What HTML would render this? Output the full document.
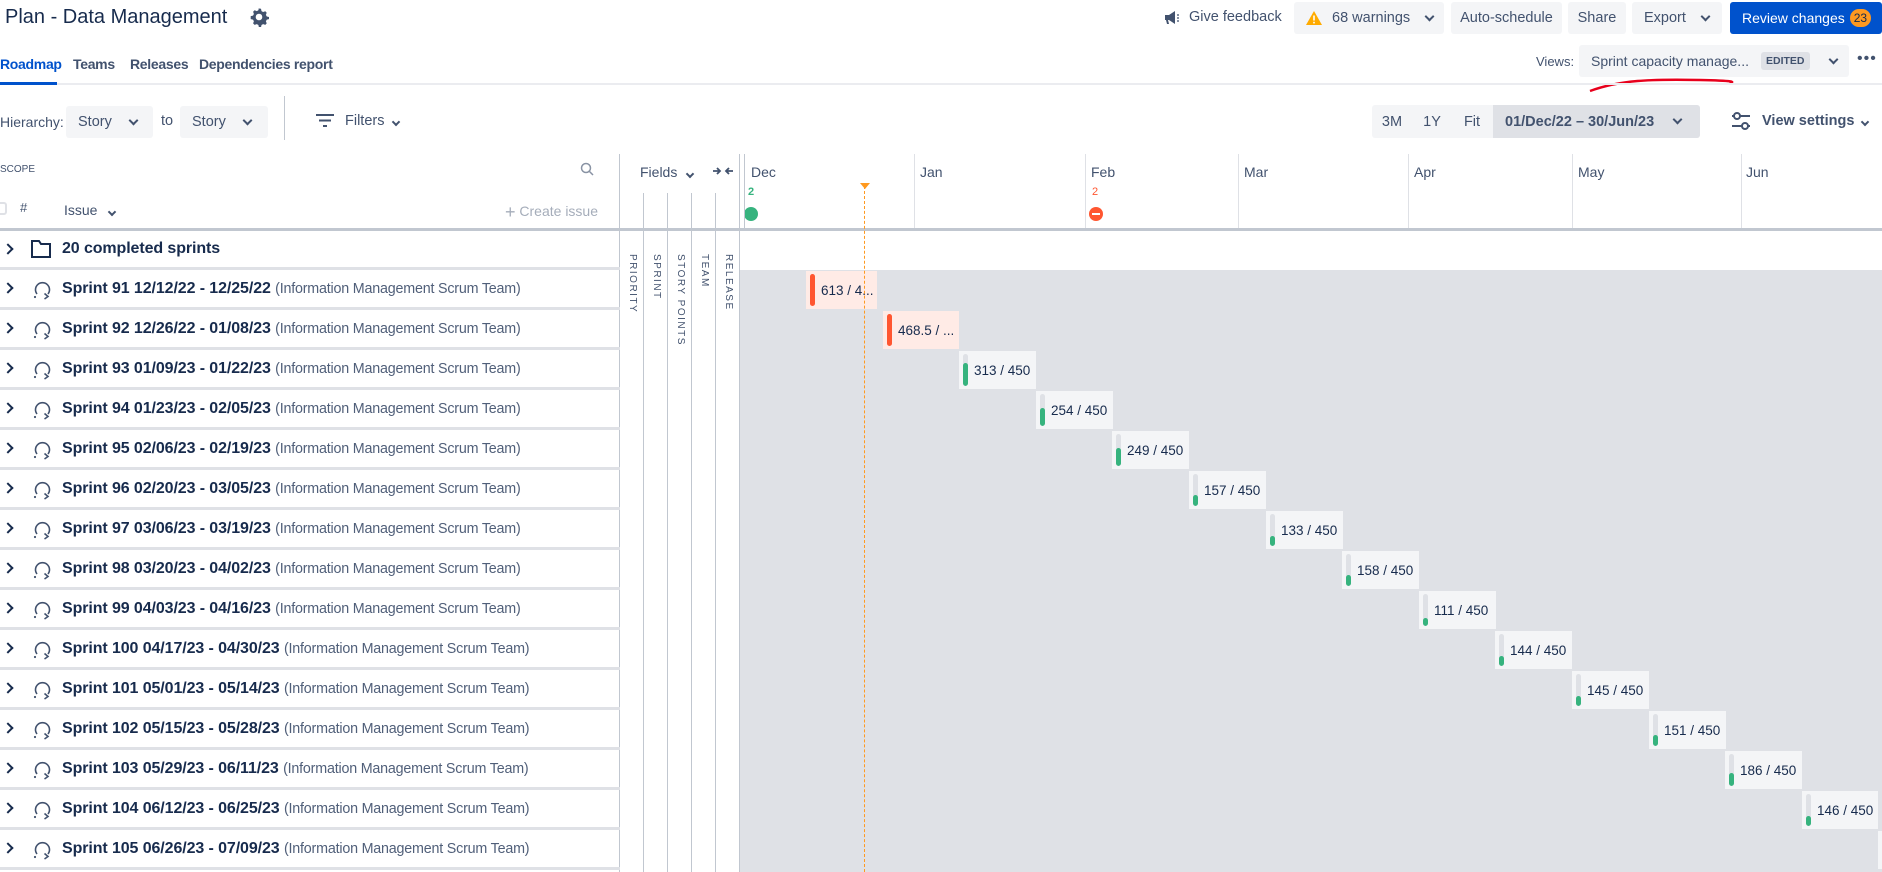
<!DOCTYPE html>
<html><head><meta charset="utf-8"><style>
*{box-sizing:border-box;margin:0;padding:0}
body{width:1882px;height:872px;overflow:hidden;background:#fff;font-family:"Liberation Sans",sans-serif;color:#172b4d;position:relative}
.a{position:absolute}
.btn{position:absolute;background:#f4f5f7;border-radius:3px;font-size:14.5px;color:#42526e;display:flex;align-items:center;white-space:nowrap}
.chev{display:inline-block;width:7px;height:7px;border-right:2px solid #42526e;border-bottom:2px solid #42526e;transform:rotate(45deg);margin-top:-4px}
.row{position:absolute;left:0;width:620px;height:40px;border-bottom:3px solid #dfe1e6;display:flex;align-items:center;font-size:16px;white-space:nowrap}
.row .ar{position:absolute;left:4px;top:14px;width:8px;height:8px;border-right:2.5px solid #172b4d;border-bottom:2.5px solid #172b4d;transform:rotate(-45deg)}
.row svg{position:absolute;left:30px;top:8px}
.row .t{position:absolute;left:62px;font-weight:bold;letter-spacing:-0.1px}
.row .t span{font-weight:normal;font-size:14.3px;color:#505f79;letter-spacing:-0.2px}
.bar{position:absolute;height:38px;background:#f4f5f7;font-size:13.5px;color:#172b4d;display:flex;align-items:center;padding-left:15px;white-space:nowrap;overflow:hidden}
.bar .tr{position:absolute;left:4px;top:3px;width:5px;height:32px;border-radius:3px;background:#dfe1e6;overflow:hidden}
.bar .tr i{position:absolute;left:0;bottom:0;width:5px;background:#36b37e;border-radius:3px}
.red{background:#ffebe6}
.red .tr{background:#ff5630}
.vt{position:absolute;top:254px;writing-mode:vertical-rl;font-size:10px;letter-spacing:1.5px;color:#42526e}
.vl{position:absolute;width:1px;background:#c1c7d0}
.mon{position:absolute;top:164px;font-size:14px;color:#42526e}
.tab{position:absolute;top:56px;font-size:14px;color:#42526e;font-weight:bold;letter-spacing:-0.3px}
</style></head><body>
<!-- header -->
<div class="a" style="left:5px;top:6px;font-size:20px;color:#172b4d">Plan - Data Management</div>
<svg class="a" style="left:249px;top:7px" width="20" height="20" viewBox="0 0 20 20"><path d="M10 1.5l2 .3.5 2.3 1.6.9 2.2-.8 1.4 1.5-.8 2.2.9 1.6 2.3.5v2.1l-2.3.5-.9 1.6.8 2.2-1.4 1.5-2.2-.8-1.6.9-.5 2.3h-2.1l-.5-2.3-1.6-.9-2.2.8-1.5-1.5.8-2.2-.9-1.6-2.3-.5V9.1l2.3-.5.9-1.6-.8-2.2 1.5-1.5 2.2.8 1.6-.9.5-2.3z" fill="#42526e"/><circle cx="10" cy="10" r="3.3" fill="#fff"/></svg>
<svg class="a" style="left:1164px;top:11px" width="16" height="14" viewBox="0 0 16 14"><path d="M1 4h4l6-4v13l-6-4H4l1 4H3L2 9H1z" fill="#42526e"/><path d="M13 4h2M13 7h2M13 10h2" stroke="#42526e" stroke-width="1.2"/></svg>
<div class="a" style="left:1189px;top:9px;font-size:14.5px;color:#42526e">Give feedback</div>
<div class="btn" style="left:1294px;top:2px;width:150px;height:32px;padding-left:12px"><svg width="16" height="14" viewBox="0 0 16 14"><path d="M8 0l8 14H0z" fill="#ffab00"/><rect x="7.2" y="4.5" width="1.6" height="5" fill="#fff"/><rect x="7.2" y="10.8" width="1.6" height="1.6" fill="#fff"/></svg><span style="margin-left:10px">68 warnings</span><span class="chev" style="margin-left:16px"></span></div>
<div class="btn" style="left:1451px;top:2px;width:111px;height:32px;justify-content:center">Auto-schedule</div>
<div class="btn" style="left:1568px;top:2px;width:58px;height:32px;justify-content:center">Share</div>
<div class="btn" style="left:1632px;top:2px;width:90px;height:32px;padding-left:12px">Export<span class="chev" style="margin-left:16px"></span></div>
<div class="btn" style="left:1730px;top:2px;width:152px;height:32px;background:#0052cc;color:#fff;padding-left:12px;font-size:14px">Review changes<span style="margin-left:5px;background:#ff991f;color:#172b4d;border-radius:10px;font-size:12px;padding:2px 4px">23</span></div>
<div class="a" style="left:1536px;top:54px;font-size:13px;color:#42526e">Views:</div>
<div class="btn" style="left:1579px;top:45px;width:270px;height:32px;padding-left:12px;font-size:14px">Sprint capacity manage...<span style="margin-left:12px;background:#dfe1e6;font-size:10.5px;font-weight:bold;padding:3px 5px;border-radius:3px">EDITED</span><span class="chev" style="margin-left:20px"></span></div>
<div class="a" style="left:1857px;top:50px;font-size:16px;color:#42526e;letter-spacing:1px">•••</div>
<svg class="a" style="left:0;top:0" width="1882" height="110"><path d="M1590 91 C1620 80,1650 79,1700 80 S1725 83,1732 83" stroke="#e8001c" stroke-width="2.4" fill="none"/></svg>
<!-- tabs -->
<div class="tab" style="left:0;color:#0052cc">Roadmap</div>
<div class="tab" style="left:73px">Teams</div>
<div class="tab" style="left:130px">Releases</div>
<div class="tab" style="left:199px">Dependencies report</div>
<div class="a" style="left:0;top:83px;width:1882px;height:2px;background:#ebecf0"></div>
<div class="a" style="left:0;top:82px;width:57px;height:3px;background:#0052cc"></div>
<!-- toolbar -->
<div class="a" style="left:0;top:114px;font-size:14px;color:#42526e">Hierarchy:</div>
<div class="btn" style="left:66px;top:106px;width:87px;height:32px;padding-left:12px">Story<span class="chev" style="margin-left:18px"></span></div>
<div class="a" style="left:161px;top:113px;font-size:14.5px;color:#42526e">to</div>
<div class="btn" style="left:180px;top:106px;width:88px;height:32px;padding-left:12px">Story<span class="chev" style="margin-left:18px"></span></div>
<div class="a" style="left:284px;top:96px;width:1px;height:44px;background:#c1c7d0"></div>
<svg class="a" style="left:316px;top:114px" width="18" height="14"><path d="M0 1h18M3 6.5h12M7 12h4" stroke="#42526e" stroke-width="2"/></svg>
<div class="a" style="left:345px;top:113px;font-size:14.5px;color:#42526e">Filters <span class="chev" style="margin-left:4px;width:6px;height:6px"></span></div>
<div class="btn" style="left:1372px;top:105px;width:328px;height:33px;background:#f4f5f7">
 <span style="width:40px;text-align:center">3M</span><span style="width:40px;text-align:center">1Y</span><span style="width:40px;text-align:center">Fit</span>
 <span style="position:absolute;left:121px;top:0;width:207px;height:33px;background:#dfe1e6;border-radius:0 3px 3px 0;display:flex;align-items:center;padding-left:12px;font-weight:bold;color:#42526e">01/Dec/22 – 30/Jun/23<span class="chev" style="margin-left:20px"></span></span></div>
<svg class="a" style="left:1731px;top:111px" width="20" height="20"><path d="M1 5h18M1 15h18" stroke="#42526e" stroke-width="2"/><circle cx="6" cy="5" r="3" fill="#fff" stroke="#42526e" stroke-width="2"/><circle cx="14" cy="15" r="3" fill="#fff" stroke="#42526e" stroke-width="2"/></svg>
<div class="a" style="left:1762px;top:113px;font-size:14.5px;color:#42526e;font-weight:bold">View settings <span class="chev" style="margin-left:4px;width:6px;height:6px"></span></div>
<!-- table header -->
<div class="a" style="left:0;top:164px;font-size:10px;color:#42526e">SCOPE</div>
<svg class="a" style="left:580px;top:162px" width="14" height="14"><circle cx="6" cy="6" r="4.5" stroke="#8993a4" stroke-width="1.5" fill="none"/><path d="M9.5 9.5L13 13" stroke="#8993a4" stroke-width="1.5"/></svg>
<div class="a" style="left:-6px;top:202px;width:13px;height:13px;border:2px solid #dfe1e6;border-radius:3px"></div>
<div class="a" style="left:20px;top:200px;font-size:13px;color:#42526e">#</div>
<div class="a" style="left:64px;top:202px;font-size:14px;color:#42526e">Issue <span class="chev" style="margin-left:8px;width:6px;height:6px"></span></div>
<div class="a" style="left:505px;top:202px;font-size:14px;color:#a5adba"><span style="font-size:18px;vertical-align:-2px">+</span> Create issue</div>
<div class="a" style="left:640px;top:164px;font-size:14px;color:#42526e">Fields <span class="chev" style="margin-left:6px;width:6px;height:6px"></span></div>
<svg class="a" style="left:713px;top:166px" width="20" height="10"><path d="M0 5h7M4 2l3 3-3 3M20 5h-7M16 2l-3 3 3 3" stroke="#42526e" stroke-width="1.8" fill="none"/></svg>
<div class="mon" style="left:751px">Dec</div><div class="mon" style="left:920px">Jan</div><div class="mon" style="left:1091px">Feb</div><div class="mon" style="left:1244px">Mar</div><div class="mon" style="left:1414px">Apr</div><div class="mon" style="left:1578px">May</div><div class="mon" style="left:1746px">Jun</div>
<div class="vl" style="left:914px;top:154px;height:75px;background:#dfe1e6"></div>
<div class="vl" style="left:1085px;top:154px;height:75px;background:#dfe1e6"></div>
<div class="vl" style="left:1238px;top:154px;height:75px;background:#dfe1e6"></div>
<div class="vl" style="left:1408px;top:154px;height:75px;background:#dfe1e6"></div>
<div class="vl" style="left:1572px;top:154px;height:75px;background:#dfe1e6"></div>
<div class="vl" style="left:1741px;top:154px;height:75px;background:#dfe1e6"></div>
<div class="a" style="left:748px;top:186px;font-size:11px;color:#36b37e;font-weight:bold">2</div>
<div class="a" style="left:744px;top:207px;width:14px;height:14px;border-radius:50%;background:#36b37e"></div>
<div class="a" style="left:1092px;top:186px;font-size:11px;color:#ff5630">2</div>
<div class="a" style="left:1089px;top:207px;width:14px;height:14px;border-radius:50%;background:#ff5630"><div style="position:absolute;left:3px;top:6px;width:8px;height:2px;background:#fff"></div></div>
<!-- gray timeline -->
<div class="a" style="left:740px;top:270px;width:1142px;height:602px;background:#dfe1e6"></div>
<div class="a" style="left:0;top:228px;width:1882px;height:3px;background:#c1c7d0"></div>
<!-- column lines -->
<div class="vl" style="left:619px;top:154px;height:718px"></div>
<div class="vl" style="left:643px;top:193px;height:679px"></div>
<div class="vl" style="left:667px;top:193px;height:679px"></div>
<div class="vl" style="left:691px;top:193px;height:679px"></div>
<div class="vl" style="left:715px;top:193px;height:679px"></div>
<div class="vl" style="left:739px;top:154px;height:718px"></div>
<div class="vl" style="left:744px;top:154px;height:75px"></div>
<div class="vt" style="left:627px">PRIORITY</div>
<div class="vt" style="left:651px">SPRINT</div>
<div class="vt" style="left:675px">STORY POINTS</div>
<div class="vt" style="left:699px">TEAM</div>
<div class="vt" style="left:723px">RELEASE</div>
<!-- rows -->
<div class="row" style="top:231px;height:39px"><div class="ar"></div><svg width="22" height="20" viewBox="0 0 22 20"><path d="M2 2h7l2 3h9v13H2z" fill="none" stroke="#172b4d" stroke-width="2"/></svg><div class="t">20 completed sprints</div></div>
<div class="row" style="top:270px"><div class="ar"></div><svg width="24" height="24" viewBox="0 0 24 24"><path d="M7 16A7 7 0 1 1 18 16" fill="none" stroke="#42526e" stroke-width="1.6"/><path d="M14.5 15.5l3.5 3-3.5 2.5" fill="none" stroke="#42526e" stroke-width="1.6"/><circle cx="5" cy="19" r="1.1" fill="#42526e"/></svg><div class="t">Sprint 91 12/12/22 - 12/25/22 <span>(Information Management Scrum Team)</span></div></div>
<div class="row" style="top:310px"><div class="ar"></div><svg width="24" height="24" viewBox="0 0 24 24"><path d="M7 16A7 7 0 1 1 18 16" fill="none" stroke="#42526e" stroke-width="1.6"/><path d="M14.5 15.5l3.5 3-3.5 2.5" fill="none" stroke="#42526e" stroke-width="1.6"/><circle cx="5" cy="19" r="1.1" fill="#42526e"/></svg><div class="t">Sprint 92 12/26/22 - 01/08/23 <span>(Information Management Scrum Team)</span></div></div>
<div class="row" style="top:350px"><div class="ar"></div><svg width="24" height="24" viewBox="0 0 24 24"><path d="M7 16A7 7 0 1 1 18 16" fill="none" stroke="#42526e" stroke-width="1.6"/><path d="M14.5 15.5l3.5 3-3.5 2.5" fill="none" stroke="#42526e" stroke-width="1.6"/><circle cx="5" cy="19" r="1.1" fill="#42526e"/></svg><div class="t">Sprint 93 01/09/23 - 01/22/23 <span>(Information Management Scrum Team)</span></div></div>
<div class="row" style="top:390px"><div class="ar"></div><svg width="24" height="24" viewBox="0 0 24 24"><path d="M7 16A7 7 0 1 1 18 16" fill="none" stroke="#42526e" stroke-width="1.6"/><path d="M14.5 15.5l3.5 3-3.5 2.5" fill="none" stroke="#42526e" stroke-width="1.6"/><circle cx="5" cy="19" r="1.1" fill="#42526e"/></svg><div class="t">Sprint 94 01/23/23 - 02/05/23 <span>(Information Management Scrum Team)</span></div></div>
<div class="row" style="top:430px"><div class="ar"></div><svg width="24" height="24" viewBox="0 0 24 24"><path d="M7 16A7 7 0 1 1 18 16" fill="none" stroke="#42526e" stroke-width="1.6"/><path d="M14.5 15.5l3.5 3-3.5 2.5" fill="none" stroke="#42526e" stroke-width="1.6"/><circle cx="5" cy="19" r="1.1" fill="#42526e"/></svg><div class="t">Sprint 95 02/06/23 - 02/19/23 <span>(Information Management Scrum Team)</span></div></div>
<div class="row" style="top:470px"><div class="ar"></div><svg width="24" height="24" viewBox="0 0 24 24"><path d="M7 16A7 7 0 1 1 18 16" fill="none" stroke="#42526e" stroke-width="1.6"/><path d="M14.5 15.5l3.5 3-3.5 2.5" fill="none" stroke="#42526e" stroke-width="1.6"/><circle cx="5" cy="19" r="1.1" fill="#42526e"/></svg><div class="t">Sprint 96 02/20/23 - 03/05/23 <span>(Information Management Scrum Team)</span></div></div>
<div class="row" style="top:510px"><div class="ar"></div><svg width="24" height="24" viewBox="0 0 24 24"><path d="M7 16A7 7 0 1 1 18 16" fill="none" stroke="#42526e" stroke-width="1.6"/><path d="M14.5 15.5l3.5 3-3.5 2.5" fill="none" stroke="#42526e" stroke-width="1.6"/><circle cx="5" cy="19" r="1.1" fill="#42526e"/></svg><div class="t">Sprint 97 03/06/23 - 03/19/23 <span>(Information Management Scrum Team)</span></div></div>
<div class="row" style="top:550px"><div class="ar"></div><svg width="24" height="24" viewBox="0 0 24 24"><path d="M7 16A7 7 0 1 1 18 16" fill="none" stroke="#42526e" stroke-width="1.6"/><path d="M14.5 15.5l3.5 3-3.5 2.5" fill="none" stroke="#42526e" stroke-width="1.6"/><circle cx="5" cy="19" r="1.1" fill="#42526e"/></svg><div class="t">Sprint 98 03/20/23 - 04/02/23 <span>(Information Management Scrum Team)</span></div></div>
<div class="row" style="top:590px"><div class="ar"></div><svg width="24" height="24" viewBox="0 0 24 24"><path d="M7 16A7 7 0 1 1 18 16" fill="none" stroke="#42526e" stroke-width="1.6"/><path d="M14.5 15.5l3.5 3-3.5 2.5" fill="none" stroke="#42526e" stroke-width="1.6"/><circle cx="5" cy="19" r="1.1" fill="#42526e"/></svg><div class="t">Sprint 99 04/03/23 - 04/16/23 <span>(Information Management Scrum Team)</span></div></div>
<div class="row" style="top:630px"><div class="ar"></div><svg width="24" height="24" viewBox="0 0 24 24"><path d="M7 16A7 7 0 1 1 18 16" fill="none" stroke="#42526e" stroke-width="1.6"/><path d="M14.5 15.5l3.5 3-3.5 2.5" fill="none" stroke="#42526e" stroke-width="1.6"/><circle cx="5" cy="19" r="1.1" fill="#42526e"/></svg><div class="t">Sprint 100 04/17/23 - 04/30/23 <span>(Information Management Scrum Team)</span></div></div>
<div class="row" style="top:670px"><div class="ar"></div><svg width="24" height="24" viewBox="0 0 24 24"><path d="M7 16A7 7 0 1 1 18 16" fill="none" stroke="#42526e" stroke-width="1.6"/><path d="M14.5 15.5l3.5 3-3.5 2.5" fill="none" stroke="#42526e" stroke-width="1.6"/><circle cx="5" cy="19" r="1.1" fill="#42526e"/></svg><div class="t">Sprint 101 05/01/23 - 05/14/23 <span>(Information Management Scrum Team)</span></div></div>
<div class="row" style="top:710px"><div class="ar"></div><svg width="24" height="24" viewBox="0 0 24 24"><path d="M7 16A7 7 0 1 1 18 16" fill="none" stroke="#42526e" stroke-width="1.6"/><path d="M14.5 15.5l3.5 3-3.5 2.5" fill="none" stroke="#42526e" stroke-width="1.6"/><circle cx="5" cy="19" r="1.1" fill="#42526e"/></svg><div class="t">Sprint 102 05/15/23 - 05/28/23 <span>(Information Management Scrum Team)</span></div></div>
<div class="row" style="top:750px"><div class="ar"></div><svg width="24" height="24" viewBox="0 0 24 24"><path d="M7 16A7 7 0 1 1 18 16" fill="none" stroke="#42526e" stroke-width="1.6"/><path d="M14.5 15.5l3.5 3-3.5 2.5" fill="none" stroke="#42526e" stroke-width="1.6"/><circle cx="5" cy="19" r="1.1" fill="#42526e"/></svg><div class="t">Sprint 103 05/29/23 - 06/11/23 <span>(Information Management Scrum Team)</span></div></div>
<div class="row" style="top:790px"><div class="ar"></div><svg width="24" height="24" viewBox="0 0 24 24"><path d="M7 16A7 7 0 1 1 18 16" fill="none" stroke="#42526e" stroke-width="1.6"/><path d="M14.5 15.5l3.5 3-3.5 2.5" fill="none" stroke="#42526e" stroke-width="1.6"/><circle cx="5" cy="19" r="1.1" fill="#42526e"/></svg><div class="t">Sprint 104 06/12/23 - 06/25/23 <span>(Information Management Scrum Team)</span></div></div>
<div class="row" style="top:830px"><div class="ar"></div><svg width="24" height="24" viewBox="0 0 24 24"><path d="M7 16A7 7 0 1 1 18 16" fill="none" stroke="#42526e" stroke-width="1.6"/><path d="M14.5 15.5l3.5 3-3.5 2.5" fill="none" stroke="#42526e" stroke-width="1.6"/><circle cx="5" cy="19" r="1.1" fill="#42526e"/></svg><div class="t">Sprint 105 06/26/23 - 07/09/23 <span>(Information Management Scrum Team)</span></div></div>
<!-- bars -->
<div class="bar red" style="left:806px;top:271px;width:71px;padding-left:15px"><div class="tr"></div>613 / 4...</div>
<div class="bar red" style="left:883px;top:311px;width:76px;padding-left:15px"><div class="tr"></div>468.5 / ...</div>
<div class="bar" style="left:959px;top:351px;width:77px"><div class="tr"><i style="height:23px"></i></div>313 / 450</div>
<div class="bar" style="left:1036px;top:391px;width:77px"><div class="tr"><i style="height:18px"></i></div>254 / 450</div>
<div class="bar" style="left:1112px;top:431px;width:77px"><div class="tr"><i style="height:18px"></i></div>249 / 450</div>
<div class="bar" style="left:1189px;top:471px;width:77px"><div class="tr"><i style="height:11px"></i></div>157 / 450</div>
<div class="bar" style="left:1266px;top:511px;width:77px"><div class="tr"><i style="height:10px"></i></div>133 / 450</div>
<div class="bar" style="left:1342px;top:551px;width:77px"><div class="tr"><i style="height:11px"></i></div>158 / 450</div>
<div class="bar" style="left:1419px;top:591px;width:77px"><div class="tr"><i style="height:8px"></i></div>111 / 450</div>
<div class="bar" style="left:1495px;top:631px;width:77px"><div class="tr"><i style="height:10px"></i></div>144 / 450</div>
<div class="bar" style="left:1572px;top:671px;width:77px"><div class="tr"><i style="height:10px"></i></div>145 / 450</div>
<div class="bar" style="left:1649px;top:711px;width:77px"><div class="tr"><i style="height:11px"></i></div>151 / 450</div>
<div class="bar" style="left:1725px;top:751px;width:77px"><div class="tr"><i style="height:13px"></i></div>186 / 450</div>
<div class="bar" style="left:1802px;top:791px;width:76px"><div class="tr"><i style="height:10px"></i></div>146 / 450</div>
<div class="bar" style="left:1878px;top:831px;width:10px"></div>
<!-- today line -->
<div class="a" style="left:864px;top:186px;width:0;height:686px;border-left:1.5px dashed #ff991f"></div>
<div class="a" style="left:860px;top:183px;width:0;height:0;border-left:5px solid transparent;border-right:5px solid transparent;border-top:6px solid #ff991f"></div>
</body></html>
